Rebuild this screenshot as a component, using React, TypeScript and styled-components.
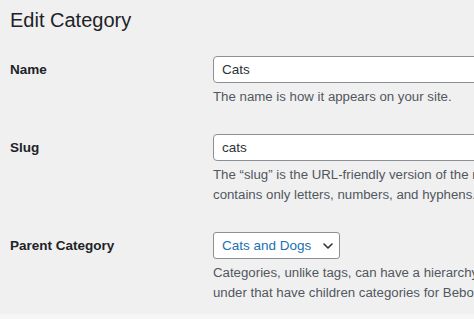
import React from 'react';
import styled, { createGlobalStyle } from 'styled-components';

const FONT = `"Liberation Sans", Arial, sans-serif`;

const GlobalStyle = createGlobalStyle`
    html, body {
        margin: 0;
        padding: 0;
        background: #f0f0f1;
        overflow: hidden;
    }
    body {
        font-family: ${FONT};
        color: #1d2327;
    }
`;

const Page = styled.div`
    width: 474px;
    height: 319px;
    display: flex;
    flex-direction: column;
    background: #f0f0f1;
    overflow: hidden;
`;

const Wrap = styled.div`
    flex: 1;
    padding: 6px 0 0 10px;
`;

const Title = styled.h1`
    margin: 0;
    font-size: 20px;
    line-height: 28px;
    font-weight: 400;
    color: #1d2327;
`;

const FormTable = styled.div`
    display: flex;
    flex-direction: column;
    gap: 27px;
    margin-top: 22px;
`;

const Row = styled.div`
    display: grid;
    grid-template-columns: 203px 1fr;
`;

const LabelCell = styled.label`
    height: 27px;
    display: flex;
    align-items: center;
    font-size: 13.5px;
    font-weight: 700;
    color: #1d2327;
`;

const FieldCell = styled.div`
    display: flex;
    flex-direction: column;
    gap: 4px;
`;

const TextInput = styled.div`
    box-sizing: border-box;
    width: 420px;
    height: 27px;
    padding: 0 8px;
    display: flex;
    align-items: center;
    background: #fff;
    border: 1px solid #8c8f94;
    border-radius: 4px;
    font-size: 13.5px;
    color: #2c3338;
`;

const Select = styled.div`
    box-sizing: border-box;
    width: 127px;
    height: 27px;
    padding: 0 6px 0 8px;
    display: flex;
    align-items: center;
    justify-content: space-between;
    background: #fff;
    border: 1px solid #8c8f94;
    border-radius: 3px;
    font-size: 13.5px;
    color: #2271b1;
`;

const Description = styled.p`
    margin: 0;
    font-size: 13.25px;
    line-height: 20px;
    color: #50575e;
    white-space: nowrap;
`;

const BottomEdge = styled.div`
    height: 5px;
    background: #f6f6f7;
`;

const Chevron = () => (
    <svg width="10" height="6" viewBox="0 0 10 6" fill="none">
        <polyline points="1,1 5,5 9,1" stroke="#2c3338" strokeWidth="1.6" strokeLinecap="round" strokeLinejoin="round" />
    </svg>
);

export default function App() {
    return (
        <Page>
            <GlobalStyle />
            <Wrap>
                <Title>Edit Category</Title>
                <FormTable>
                    <Row>
                        <LabelCell>Name</LabelCell>
                        <FieldCell>
                            <TextInput>Cats</TextInput>
                            <Description>The name is how it appears on your site.</Description>
                        </FieldCell>
                    </Row>
                    <Row>
                        <LabelCell>Slug</LabelCell>
                        <FieldCell>
                            <TextInput>cats</TextInput>
                            <Description>
                                The “slug” is the URL-friendly version of the name. It is usually all lowercase and
                                <br />
                                contains only letters, numbers, and hyphens.
                            </Description>
                        </FieldCell>
                    </Row>
                    <Row>
                        <LabelCell>Parent Category</LabelCell>
                        <FieldCell>
                            <Select>
                                <span>Cats and Dogs</span>
                                <Chevron />
                            </Select>
                            <Description>
                                Categories, unlike tags, can have a hierarchy. You might have a Jazz category, and
                                <br />
                                under that have children categories for Bebop and Big Band. Totally optional.
                            </Description>
                        </FieldCell>
                    </Row>
                </FormTable>
            </Wrap>
            <BottomEdge />
        </Page>
    );
}
